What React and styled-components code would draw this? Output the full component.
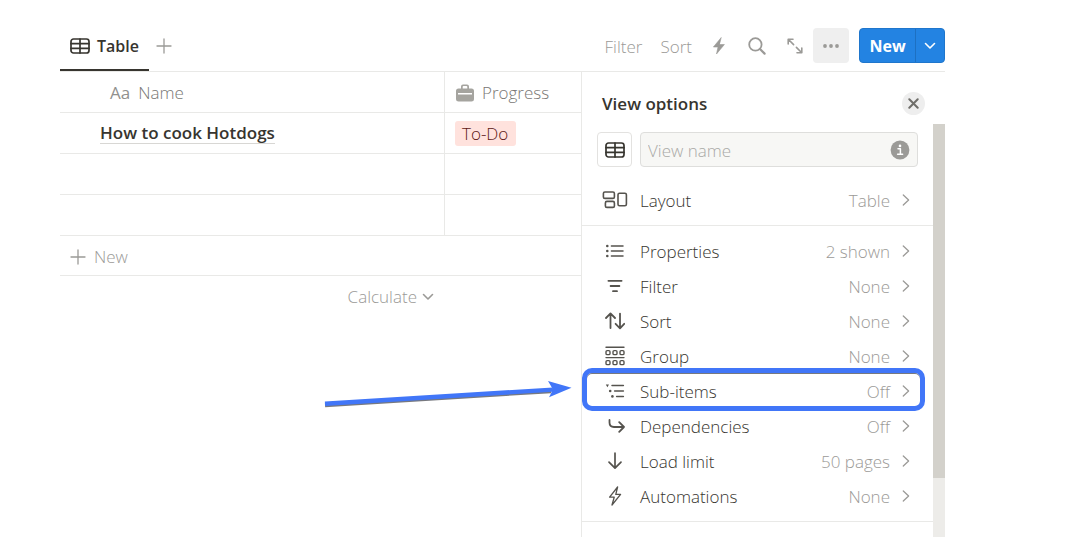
import React from 'react';
import styled, { createGlobalStyle } from 'styled-components';

const GlobalStyle = createGlobalStyle`
  * { box-sizing: border-box; }
  body {
    margin: 0;
    background: #fff;
    color: #37352f;
    font-family: "Open Sans", "Noto Sans", "Liberation Sans", sans-serif;
    font-size: 17px;
    font-weight: 300;
    line-height: 24px;
  }
  button, input {
    margin: 0;
    padding: 0;
    border: 0;
    background: none;
    color: inherit;
    font: inherit;
  }
  button { cursor: pointer; }
`;

const Page = styled.main`
  display: flex;
  flex-direction: column;
  min-height: 100vh;
  padding: 20px 141px 0 60px;
`;

const Toolbar = styled.header`
  display: flex;
  justify-content: space-between;
  height: 52px;
  border-bottom: 1px solid #e9e9e7;
`;

const Tabs = styled.nav`
  display: flex;
  gap: 6px;
`;

const Tab = styled.button`
  display: flex;
  align-items: center;
  gap: 7px;
  padding: 2px 10px 0;
  border-bottom: 2px solid #37352f;
  font-weight: 600;
  font-size: 16px;
`;

const IconButton = styled.button`
  display: grid;
  place-items: center;
  width: ${(p) => p.$width || 36}px;
  height: 35px;
  border-radius: 4px;
  color: #9b9a97;
  background: ${(p) => (p.$active ? '#efefef' : 'transparent')};
`;

const AddTab = styled(IconButton)`
  width: 18px;
  height: 51px;
`;

const Actions = styled.div`
  display: flex;
  align-items: center;
`;

const TextAction = styled.button`
  margin-right: 18px;
  padding-top: 2px;
  color: #9b9a97;
`;

const IconGroup = styled.div`
  display: flex;
  margin-left: -9px;
`;

const SplitButton = styled.div`
  display: flex;
  height: 35px;
  margin-left: 10px;
  border: 1px solid #1f76cc;
  border-radius: 4px;
  background: #2383e2;
  color: #fff;
`;

const NewButton = styled.button`
  width: 56px;
  border-right: 1px solid #1d70c2;
  font-weight: 700;
  font-size: 16px;
`;

const NewMenuButton = styled.button`
  display: grid;
  place-items: center;
  width: 28px;
`;

const Body = styled.div`
  display: flex;
  flex: 1;
`;

const Database = styled.section`
  flex: 1;
  min-width: 0;
`;

const Table = styled.table`
  width: 100%;
  table-layout: fixed;
  border-collapse: separate;
  border-spacing: 0;
`;

const cell = `
  height: 41px;
  border-bottom: 1px solid #e9e9e7;
  text-align: left;
  font-weight: 300;
`;

const HeadCell = styled.th`
  ${cell}
  width: ${(p) => p.$width || 'auto'};
  padding: 2px 10px 0 ${(p) => p.$indent}px;
  color: #787774;
  & + & { border-left: 1px solid #e9e9e7; }
`;

const Cell = styled.td`
  ${cell}
  padding: 0 10px 0 ${(p) => p.$indent || 10}px;
  & + & { border-left: 1px solid #e9e9e7; }
`;

const HeadLabel = styled.span`
  display: flex;
  align-items: center;
  gap: 8px;
`;

const TypeGlyph = styled.span`
  color: #91918e;
  font-weight: 400;
`;

const PageLink = styled.a`
  display: inline-block;
  border-bottom: 1px solid #d8d7d4;
  color: inherit;
  text-decoration: none;
  font-size: 17px;
  font-weight: 600;
  line-height: 20px;
`;

const Tag = styled.span`
  display: inline-block;
  height: 25px;
  padding: 0 8px 0 7px;
  border-radius: 3px;
  background: #ffe2dd;
  color: #5d1715;
  line-height: 26px;
  vertical-align: middle;
`;

const NewRow = styled.button`
  display: flex;
  align-items: center;
  gap: 8px;
  width: 100%;
  height: 40px;
  padding: 2px 10px 0;
  border-bottom: 1px solid #e9e9e7;
  color: #9b9a97;
`;

const Calculate = styled.button`
  display: flex;
  align-items: center;
  justify-content: flex-end;
  gap: 5px;
  width: 384px;
  height: 42px;
  padding-right: 10px;
  color: #9b9a97;
`;

const Panel = styled.aside`
  display: flex;
  flex-direction: column;
  width: 364px;
  border-left: 1px solid #e9e9e7;
`;

const PanelHeader = styled.div`
  display: flex;
  align-items: center;
  justify-content: space-between;
  height: 52px;
  padding: 11px 20px 0;
`;

const PanelTitle = styled.h2`
  margin: 0;
  font-size: 17px;
  font-weight: 600;
`;

const CloseButton = styled.button`
  display: grid;
  place-items: center;
  width: 23px;
  height: 23px;
  border-radius: 50%;
  background: #eeeeee;
  color: #6f6e6a;
`;

const PanelScroll = styled.div`
  display: flex;
  flex: 1;
`;

const PanelContent = styled.div`
  flex: 1;
  min-width: 0;
`;

const ScrollTrack = styled.div`
  width: 12px;
  background: #edece9;
`;

const ScrollThumb = styled.div`
  height: 354px;
  background: #d3d1cb;
`;

const NameRow = styled.div`
  display: flex;
  gap: 8px;
  padding: 8px 15px 8px;
`;

const ViewIconButton = styled.button`
  display: grid;
  place-items: center;
  width: 35px;
  height: 35px;
  border: 1px solid #e3e2e0;
  border-radius: 4px;
`;

const NameField = styled.label`
  display: flex;
  align-items: center;
  flex: 1;
  height: 35px;
  padding: 0 7px;
  border: 1px solid #dededc;
  border-radius: 4px;
  background: #f7f7f5;
`;

const NameInput = styled.input`
  flex: 1;
  min-width: 0;
  padding-top: 2px;
  outline: 0;
  &::placeholder { color: #a9a9a6; opacity: 1; }
`;

const OptionGroup = styled.ul`
  margin: 0;
  padding: 8px 0 7px;
  list-style: none;
  border-bottom: 1px solid #e9e9e7;
`;

const OptionItem = styled.li`
  position: relative;
`;

const OptionButton = styled.button`
  display: flex;
  align-items: center;
  width: 100%;
  height: 35px;
  padding: 0 23px 2px 20px;
`;

const OptionIcon = styled.span`
  display: grid;
  place-items: center;
  width: 26px;
  margin-right: 12px;
  color: #55534e;
`;

const OptionText = styled.span`
  padding-top: 2px;
`;

const OptionLabel = styled(OptionText)`
  flex: 1;
  text-align: left;
`;

const OptionValue = styled.span`
  display: flex;
  align-items: center;
  gap: 12px;
  color: #9b9a97;
`;

const Highlight = styled.span`
  position: absolute;
  inset: -6px 8px -2px 0;
  border: 5px solid #4176f8;
  border-radius: 10px;
  box-shadow: inset 0 1px 0 #77797f;
  pointer-events: none;
`;

const Pointer = styled.svg`
  position: absolute;
  top: 3px;
  right: 361px;
  pointer-events: none;
`;

const Drawing = styled.svg`
  display: block;
  flex: none;
`;

const Svg = ({ w = 20, h = 20, sw = 1.5, children }) => (
  <Drawing
    width={w}
    height={h}
    viewBox={`0 0 ${w} ${h}`}
    fill="none"
    stroke="currentColor"
    strokeWidth={sw}
    strokeLinecap="round"
    strokeLinejoin="round"
    aria-hidden="true"
  >
    {children}
  </Drawing>
);

const TableIcon = () => (
  <Svg w={20} h={16} sw={1.7}>
    <rect x="1" y="1" width="18" height="14" rx="2.5" />
    <path d="M1 5.7H19M1 10.4H19M10 1V15" />
  </Svg>
);
const PlusIcon = () => (
  <Svg w={16} h={16} sw={1.3}><path d="M8 1V15M1 8H15" /></Svg>
);
const BoltIcon = () => (
  <Svg w={14} h={18} sw={0.6}>
    <path fill="currentColor" d="M9 .8L1.4 10H6L4.5 17L12.4 7.5H7.7Z" />
  </Svg>
);
const SearchIcon = () => (
  <Svg w={18} h={18} sw={1.8}>
    <circle cx="7.4" cy="7.4" r="6.2" />
    <path d="M12 12L16.6 16.6" strokeWidth="2.2" />
  </Svg>
);
const ExpandIcon = () => (
  <Svg w={16} h={16} sw={1.6}>
    <path d="M1.2 6V1.2H6M1.5 1.5L6.6 6.6M14.8 10V14.8H10M14.5 14.5L9.4 9.4" />
  </Svg>
);
const DotsIcon = () => (
  <Svg w={18} h={4} sw={0}>
    <g fill="currentColor">
      <circle cx="3" cy="2" r="1.9" />
      <circle cx="9" cy="2" r="1.9" />
      <circle cx="15" cy="2" r="1.9" />
    </g>
  </Svg>
);
const ChevronDown = () => (
  <Svg w={12} h={8} sw={1.6}><path d="M1.5 1.5L6 6L10.5 1.5" /></Svg>
);
const ChevronRight = () => (
  <Svg w={8} h={12} sw={1.3}><path d="M1.3 1L6.6 6L1.3 11" /></Svg>
);
const CloseIcon = () => (
  <Svg w={11} h={11} sw={2}><path d="M1.3 1.3L9.7 9.7M9.7 1.3L1.3 9.7" /></Svg>
);
const CaseIcon = () => (
  <Svg w={18} h={18} sw={0}>
    <path
      fill="#a5a49f"
      fillRule="evenodd"
      d="M5 4.5V2.6Q5 .5 7 .5H11Q13 .5 13 2.6V4.5H15.5Q18 4.5 18 7V9H0V7Q0 4.5 2.5 4.5ZM6.7 4.5H11.3V2.8Q11.3 2 10.5 2H7.5Q6.7 2 6.7 2.8Z"
    />
    <path fill="#a5a49f" d="M0 9H2V10.5H16V9H18V15.2Q18 17.5 15.5 17.5H2.5Q0 17.5 0 15.2Z" />
  </Svg>
);
const InfoIcon = () => (
  <Svg w={20} h={20} sw={0}>
    <circle cx="10" cy="10" r="9.4" fill="#9b9a97" />
    <circle cx="10" cy="5.9" r="1.3" fill="#fff" />
    <path d="M8 8.8H10.4V14M7.6 14.2H12.6" stroke="#fff" strokeWidth="1.5" />
  </Svg>
);
const LayoutIcon = () => (
  <Svg w={26} h={18} sw={1.6}>
    <rect x="1.4" y="1" width="11" height="6.4" rx="1.5" />
    <rect x="3.4" y="10.4" width="9" height="6" rx="1.5" />
    <rect x="16" y="2.2" width="8.4" height="12.6" rx="1.5" />
  </Svg>
);
const ListIcon = () => (
  <Svg w={20} h={14} sw={1.5}>
    <path d="M6.4 2H18M6.4 7H18M6.4 12H18" />
    <g fill="currentColor" stroke="none">
      <circle cx="2.3" cy="2" r="1.3" />
      <circle cx="2.3" cy="7" r="1.3" />
      <circle cx="2.3" cy="12" r="1.3" />
    </g>
  </Svg>
);
const FilterIcon = () => (
  <Svg w={16} h={14} sw={1.8}><path d="M1.4 1.8H14.6M3.6 7H12.4M6 12.2H10" /></Svg>
);
const SortIcon = () => (
  <Svg w={20} h={18} sw={1.8}>
    <path d="M5.5 16V1.6M1 6L5.5 1.4L10 6M15 1.6V16M10.6 11.8L15 16.4L19.2 11.8" />
  </Svg>
);
const GroupIcon = () => (
  <Svg w={20} h={20} sw={1.4}>
    <path d="M1 1.2H19M1 11.6H19" />
    {[4.6, 14.6].map((y) =>
      [1, 8, 15].map((x) => (
        <rect key={`${x}-${y}`} x={x} y={y} width="4" height="4" rx="1.2" />
      ))
    )}
  </Svg>
);
const SubItemsIcon = () => (
  <Svg w={20} h={14} sw={1.5}>
    <path d="M7 1.6H18.4M9.6 7H18.4M11.6 12.4H18.4" />
    <g fill="currentColor" stroke="none">
      <path d="M.8 .6H4L2.4 3.2Z" />
      <circle cx="5.2" cy="7" r="1.3" />
      <circle cx="7.4" cy="12.4" r="1.3" />
    </g>
  </Svg>
);
const DependencyIcon = () => (
  <Svg w={20} h={14} sw={1.8}>
    <path d="M4.5 1V3.6Q4.5 8 9 8H19M14.2 3.2L19 8L14.2 12.8" />
  </Svg>
);
const ArrowDownIcon = () => (
  <Svg w={16} h={18} sw={1.7}><path d="M8 1.2V16M2 10.2L8 16.2L14 10.2" /></Svg>
);
const BoltOutlineIcon = () => (
  <Svg w={14} h={20} sw={1.3}>
    <path d="M9.6 1L1.6 11.2H6.2L4 19L12.6 8.4H7.8Z" />
  </Svg>
);

const layoutOptions = [{ label: 'Layout', value: 'Table', icon: LayoutIcon }];

const viewOptions = [
  { label: 'Properties', value: '2 shown', icon: ListIcon },
  { label: 'Filter', value: 'None', icon: FilterIcon },
  { label: 'Sort', value: 'None', icon: SortIcon },
  { label: 'Group', value: 'None', icon: GroupIcon },
  { label: 'Sub-items', value: 'Off', icon: SubItemsIcon, highlighted: true },
  { label: 'Dependencies', value: 'Off', icon: DependencyIcon },
  { label: 'Load limit', value: '50 pages', icon: ArrowDownIcon },
  { label: 'Automations', value: 'None', icon: BoltOutlineIcon },
];

const Options = ({ items }) => (
  <OptionGroup>
    {items.map(({ label, value, icon: Icon, highlighted }) => (
      <OptionItem key={label}>
        <OptionButton type="button">
          <OptionIcon><Icon /></OptionIcon>
          <OptionLabel>{label}</OptionLabel>
          <OptionValue>
            <OptionText>{value}</OptionText>
            <ChevronRight />
          </OptionValue>
        </OptionButton>
        {highlighted && (
          <>
            <Highlight />
            <Pointer width="248" height="32" viewBox="0 0 248 32" aria-hidden="true">
              <path d="M1 28.2L227 14.2" stroke="#77797f" strokeWidth="4" />
              <path d="M1 26.8L229 12.6" stroke="#4176f8" strokeWidth="4.4" />
              <path d="M224 4L247.5 10.8L225 20.2L229 12.4Z" fill="#4176f8" />
            </Pointer>
          </>
        )}
      </OptionItem>
    ))}
  </OptionGroup>
);

export default function App() {
  return (
    <>
      <GlobalStyle />
      <Page>
        <Toolbar>
          <Tabs>
            <Tab type="button"><TableIcon />Table</Tab>
            <AddTab type="button" aria-label="Add view"><PlusIcon /></AddTab>
          </Tabs>
          <Actions>
            <TextAction type="button">Filter</TextAction>
            <TextAction type="button">Sort</TextAction>
            <IconGroup>
              <IconButton type="button" aria-label="Automations"><BoltIcon /></IconButton>
              <IconButton type="button" $width={40} aria-label="Search"><SearchIcon /></IconButton>
              <IconButton type="button" aria-label="Open full page"><ExpandIcon /></IconButton>
              <IconButton type="button" $width={36} $active aria-label="View options">
                <DotsIcon />
              </IconButton>
            </IconGroup>
            <SplitButton>
              <NewButton type="button">New</NewButton>
              <NewMenuButton type="button" aria-label="New from template">
                <ChevronDown />
              </NewMenuButton>
            </SplitButton>
          </Actions>
        </Toolbar>
        <Body>
          <Database>
            <Table>
              <thead>
                <tr>
                  <HeadCell $width="384px" $indent={50}>
                    <HeadLabel><TypeGlyph>Aa</TypeGlyph>Name</HeadLabel>
                  </HeadCell>
                  <HeadCell $indent={11}>
                    <HeadLabel><CaseIcon />Progress</HeadLabel>
                  </HeadCell>
                </tr>
              </thead>
              <tbody>
                <tr>
                  <Cell $indent={40}><PageLink href="#hotdogs">How to cook Hotdogs</PageLink></Cell>
                  <Cell><Tag>To-Do</Tag></Cell>
                </tr>
                <tr><Cell /><Cell /></tr>
                <tr><Cell /><Cell /></tr>
              </tbody>
            </Table>
            <NewRow type="button"><PlusIcon />New</NewRow>
            <Calculate type="button">Calculate<ChevronDown /></Calculate>
          </Database>
          <Panel>
            <PanelHeader>
              <PanelTitle>View options</PanelTitle>
              <CloseButton type="button" aria-label="Close"><CloseIcon /></CloseButton>
            </PanelHeader>
            <PanelScroll>
              <PanelContent>
                <NameRow>
                  <ViewIconButton type="button" aria-label="View icon"><TableIcon /></ViewIconButton>
                  <NameField>
                    <NameInput type="text" placeholder="View name" aria-label="View name" />
                    <InfoIcon />
                  </NameField>
                </NameRow>
                <Options items={layoutOptions} />
                <Options items={viewOptions} />
              </PanelContent>
              <ScrollTrack><ScrollThumb /></ScrollTrack>
            </PanelScroll>
          </Panel>
        </Body>
      </Page>
    </>
  );
}
